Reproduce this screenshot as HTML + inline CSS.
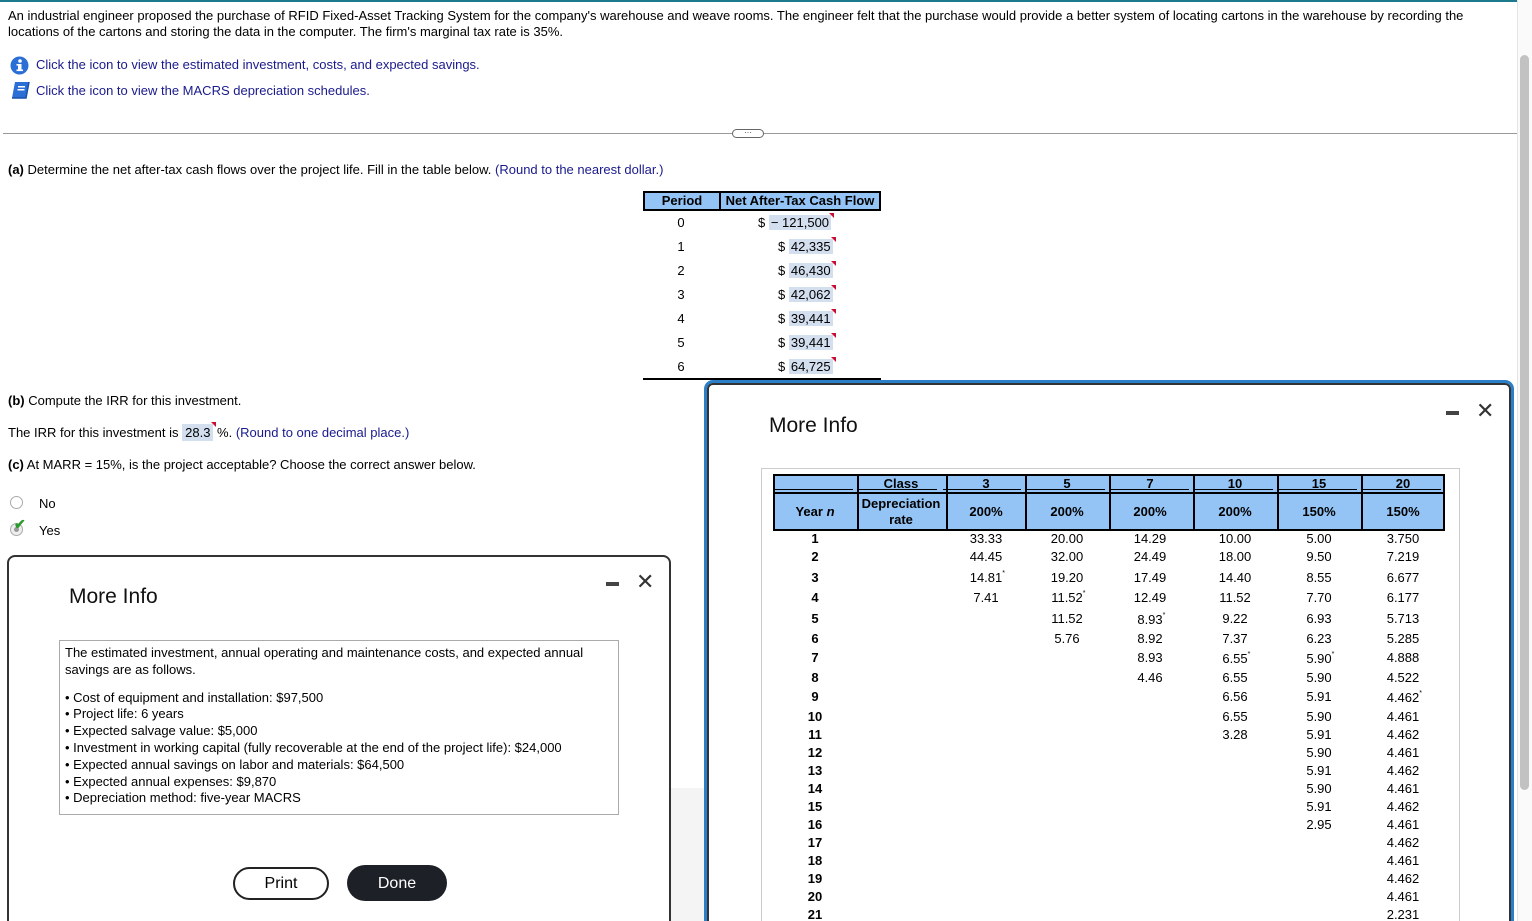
<!DOCTYPE html>
<html><head><meta charset="utf-8"><style>
*{margin:0;padding:0;box-sizing:border-box}
html,body{width:1532px;height:921px;overflow:hidden}
body{background:#fff;font-family:"Liberation Sans",Arial,sans-serif;font-size:13px;color:#000}
#w{position:relative;width:1532px;height:921px;overflow:hidden}
.a{position:absolute;white-space:nowrap}
.blue{color:#1a1a8c}
.inp{background:#d3deef;padding:0 2px;position:relative}
.inp:after{content:"";position:absolute;right:-3px;top:-2px;border-top:5px solid #c8102e;border-left:5px solid transparent}
.hd{position:absolute;background:#93c4f5;border:2px solid #000;font-weight:bold;text-align:center}
.c{position:absolute;text-align:center;width:60px;margin-left:-30px}
sup{font-size:7px;position:absolute}
</style></head><body><div id="w">
<div style="position:absolute;left:0;top:0;width:1532px;height:2px;background:#1d7a8c"></div>
<div class="a" style="left:8px;top:8px;line-height:16px">An industrial engineer proposed the purchase of RFID Fixed-Asset Tracking System for the company's warehouse and weave rooms. The engineer felt that the purchase would provide a better system of locating cartons in the warehouse by recording the<br>locations of the cartons and storing the data in the computer. The firm's marginal tax rate is 35%.</div>
<svg class="a" style="left:10px;top:56px" width="19" height="19"><circle cx="9.5" cy="9.5" r="9" fill="#2b6fd6"/><rect x="8" y="8" width="3.5" height="7" fill="#fff"/><rect x="6.5" y="8" width="5" height="1.6" fill="#fff"/><rect x="6.5" y="13.5" width="6.5" height="1.6" fill="#fff"/><circle cx="10" cy="5" r="1.8" fill="#fff"/></svg>
<div class="a blue" style="left:36px;top:57px">Click the icon to view the estimated investment, costs, and expected savings.</div>
<svg class="a" style="left:10px;top:81px" width="20" height="20"><path d="M5 1h14l-3 16H2z" fill="#2b6fd6"/><path d="M2 17h14l3-16" fill="none" stroke="#1a50a8" stroke-width="1.5"/><rect x="8" y="5" width="7" height="1.5" fill="#fff"/><rect x="7.5" y="8" width="7" height="1.5" fill="#fff"/></svg>
<div class="a blue" style="left:36px;top:83px">Click the icon to view the MACRS depreciation schedules.</div>
<div style="position:absolute;left:3px;top:133px;width:1514px;height:1px;background:#999"></div>
<div style="position:absolute;left:732px;top:129px;width:32px;height:9px;border:1px solid #666;border-radius:5px;background:#fff;font-size:8px;line-height:5px;text-align:center;color:#333">···</div>
<div class="a" style="left:8px;top:162px"><b>(a)</b> Determine the net after-tax cash flows over the project life. Fill in the table below. <span class="blue">(Round to the nearest dollar.)</span></div>
<div class="hd" style="left:643px;top:191px;width:78px;height:20px;line-height:16px">Period</div>
<div class="hd" style="left:719px;top:191px;width:162px;height:20px;line-height:16px;border-left-width:2px">Net After-Tax Cash Flow</div>
<div style="position:absolute;left:643px;top:378px;width:238px;height:2px;background:#000"></div>
<div class="c" style="left:681px;top:215px">0</div><div class="a" style="left:758px;top:215px">$ <span class="inp">&minus; 121,500</span></div>
<div class="c" style="left:681px;top:239px">1</div><div class="a" style="left:778px;top:239px">$ <span class="inp">42,335</span></div>
<div class="c" style="left:681px;top:263px">2</div><div class="a" style="left:778px;top:263px">$ <span class="inp">46,430</span></div>
<div class="c" style="left:681px;top:287px">3</div><div class="a" style="left:778px;top:287px">$ <span class="inp">42,062</span></div>
<div class="c" style="left:681px;top:311px">4</div><div class="a" style="left:778px;top:311px">$ <span class="inp">39,441</span></div>
<div class="c" style="left:681px;top:335px">5</div><div class="a" style="left:778px;top:335px">$ <span class="inp">39,441</span></div>
<div class="c" style="left:681px;top:359px">6</div><div class="a" style="left:778px;top:359px">$ <span class="inp">64,725</span></div>
<div class="a" style="left:8px;top:393px"><b>(b)</b> Compute the IRR for this investment.</div>
<div class="a" style="left:8px;top:425px">The IRR for this investment is <span class="inp" style="padding:1px 3px">28.3</span> %. <span class="blue">(Round to one decimal place.)</span></div>
<div class="a" style="left:8px;top:457px"><b>(c)</b> At MARR = 15%, is the project acceptable? Choose the correct answer below.</div>
<div style="position:absolute;left:10px;top:496px;width:13px;height:13px;border:1px solid #aaa;border-radius:50%"></div>
<div class="a" style="left:39px;top:496px">No</div>
<div style="position:absolute;left:10px;top:523px;width:13px;height:13px;border:1px solid #aaa;border-radius:50%;background:#eee"><div style="margin:3px;width:5px;height:5px;border-radius:50%;background:#999"></div></div>
<div class="a" style="left:14px;top:516px;color:#2a9a2a;font-size:14px;font-weight:bold">✔</div>
<div class="a" style="left:39px;top:523px">Yes</div>
<div style="position:absolute;left:670px;top:788px;width:36px;height:133px;background:#f4f4f4"></div>
<!-- left modal -->
<div style="position:absolute;left:7px;top:555px;width:664px;height:400px;border:2px solid #333;border-radius:8px;background:#fff">
<div class="a" style="left:60px;top:28px;font-size:21px;color:#111">More Info</div>
<div class="a" style="left:597px;top:25px;width:13px;height:4px;background:#444"></div>
<div class="a" style="left:627px;top:12px;font-size:22px;color:#333">✕</div>
<div style="position:absolute;left:50px;top:83px;width:560px;height:175px;border:1px solid #aaa;padding:4px 5px;line-height:16.8px">The estimated investment, annual operating and maintenance costs, and expected annual<br>savings are as follows.<div style="height:11px"></div>• Cost of equipment and installation: $97,500<br>• Project life: 6 years<br>• Expected salvage value: $5,000<br>• Investment in working capital (fully recoverable at the end of the project life): $24,000<br>• Expected annual savings on labor and materials: $64,500<br>• Expected annual expenses: $9,870<br>• Depreciation method: five-year MACRS</div>
<div style="position:absolute;left:224px;top:310px;width:96px;height:33px;border:2px solid #222;border-radius:17px;text-align:center;line-height:29px;font-size:16px">Print</div>
<div style="position:absolute;left:338px;top:308px;width:100px;height:36px;background:#1d2026;border-radius:18px;text-align:center;line-height:38px;font-size:16px;color:#fff">Done</div>
</div>
<!-- right modal -->
<div style="position:absolute;left:704px;top:380px;width:810px;height:580px;border:3px solid #2a7fc8;border-radius:9px;background:#fff">
<div style="position:absolute;inset:0;border:2px solid #333;border-radius:6px"></div>
<div class="a" style="left:62px;top:31px;font-size:21px;color:#111">More Info</div>
<div class="a" style="left:739px;top:28px;width:13px;height:4px;background:#444"></div>
<div class="a" style="left:769px;top:15px;font-size:22px;color:#333">✕</div>
<div style="position:absolute;left:54px;top:85px;width:699px;height:490px;border:1px solid #ccc"></div>
</div>
<div style="position:absolute;left:773px;top:474px;width:672px;height:57px;background:#93c4f5;border:2px solid #000"></div>
<div style="position:absolute;left:773px;top:492px;width:672px;height:2px;background:#000"></div>
<div style="position:absolute;left:775px;top:489px;width:668px;height:1px;background:repeating-linear-gradient(90deg,#000 0 78px,transparent 78px 84px)"></div>
<div style="position:absolute;left:857px;top:474px;width:2px;height:57px;background:#000"></div>
<div style="position:absolute;left:946px;top:474px;width:2px;height:57px;background:#000"></div>
<div style="position:absolute;left:1025px;top:474px;width:2px;height:57px;background:#000"></div>
<div style="position:absolute;left:1109px;top:474px;width:2px;height:57px;background:#000"></div>
<div style="position:absolute;left:1193px;top:474px;width:2px;height:57px;background:#000"></div>
<div style="position:absolute;left:1277px;top:474px;width:2px;height:57px;background:#000"></div>
<div style="position:absolute;left:1361px;top:474px;width:2px;height:57px;background:#000"></div>
<div style="font-weight:bold">
<div class="c" style="left:901px;top:476px">Class</div>
<div class="c" style="left:986px;top:476px">3</div><div class="c" style="left:1067px;top:476px">5</div><div class="c" style="left:1150px;top:476px">7</div><div class="c" style="left:1235px;top:476px">10</div><div class="c" style="left:1319px;top:476px">15</div><div class="c" style="left:1403px;top:476px">20</div>
<div class="c" style="left:815px;top:504px">Year <i>n</i></div>
<div class="c" style="left:901px;top:496px;width:90px;margin-left:-45px;line-height:16px">Depreciation<br>rate</div>
<div class="c" style="left:986px;top:504px">200%</div><div class="c" style="left:1067px;top:504px">200%</div><div class="c" style="left:1150px;top:504px">200%</div><div class="c" style="left:1235px;top:504px">200%</div><div class="c" style="left:1319px;top:504px">150%</div><div class="c" style="left:1403px;top:504px">150%</div>
<div class="c" style="left:815px;top:531px">1</div><div class="c" style="left:815px;top:549px">2</div><div class="c" style="left:815px;top:570px">3</div><div class="c" style="left:815px;top:590px">4</div><div class="c" style="left:815px;top:611px">5</div><div class="c" style="left:815px;top:631px">6</div><div class="c" style="left:815px;top:650px">7</div><div class="c" style="left:815px;top:670px">8</div><div class="c" style="left:815px;top:689px">9</div><div class="c" style="left:815px;top:709px">10</div><div class="c" style="left:815px;top:727px">11</div><div class="c" style="left:815px;top:745px">12</div><div class="c" style="left:815px;top:763px">13</div><div class="c" style="left:815px;top:781px">14</div><div class="c" style="left:815px;top:799px">15</div><div class="c" style="left:815px;top:817px">16</div><div class="c" style="left:815px;top:835px">17</div><div class="c" style="left:815px;top:853px">18</div><div class="c" style="left:815px;top:871px">19</div><div class="c" style="left:815px;top:889px">20</div><div class="c" style="left:815px;top:907px">21</div>
</div>
<div>
<div class="c" style="left:986px;top:531px">33.33</div><div class="c" style="left:986px;top:549px">44.45</div><div class="c" style="left:986px;top:570px">14.81<sup>*</sup></div><div class="c" style="left:986px;top:590px">7.41</div>
<div class="c" style="left:1067px;top:531px">20.00</div><div class="c" style="left:1067px;top:549px">32.00</div><div class="c" style="left:1067px;top:570px">19.20</div><div class="c" style="left:1067px;top:590px">11.52<sup>*</sup></div><div class="c" style="left:1067px;top:611px">11.52</div><div class="c" style="left:1067px;top:631px">5.76</div>
<div class="c" style="left:1150px;top:531px">14.29</div><div class="c" style="left:1150px;top:549px">24.49</div><div class="c" style="left:1150px;top:570px">17.49</div><div class="c" style="left:1150px;top:590px">12.49</div><div class="c" style="left:1150px;top:612px">8.93<sup>*</sup></div><div class="c" style="left:1150px;top:631px">8.92</div><div class="c" style="left:1150px;top:650px">8.93</div><div class="c" style="left:1150px;top:670px">4.46</div>
<div class="c" style="left:1235px;top:531px">10.00</div><div class="c" style="left:1235px;top:549px">18.00</div><div class="c" style="left:1235px;top:570px">14.40</div><div class="c" style="left:1235px;top:590px">11.52</div><div class="c" style="left:1235px;top:611px">9.22</div><div class="c" style="left:1235px;top:631px">7.37</div><div class="c" style="left:1235px;top:651px">6.55<sup>*</sup></div><div class="c" style="left:1235px;top:670px">6.55</div><div class="c" style="left:1235px;top:689px">6.56</div><div class="c" style="left:1235px;top:709px">6.55</div><div class="c" style="left:1235px;top:727px">3.28</div>
<div class="c" style="left:1319px;top:531px">5.00</div><div class="c" style="left:1319px;top:549px">9.50</div><div class="c" style="left:1319px;top:570px">8.55</div><div class="c" style="left:1319px;top:590px">7.70</div><div class="c" style="left:1319px;top:611px">6.93</div><div class="c" style="left:1319px;top:631px">6.23</div><div class="c" style="left:1319px;top:651px">5.90<sup>*</sup></div><div class="c" style="left:1319px;top:670px">5.90</div><div class="c" style="left:1319px;top:689px">5.91</div><div class="c" style="left:1319px;top:709px">5.90</div><div class="c" style="left:1319px;top:727px">5.91</div><div class="c" style="left:1319px;top:745px">5.90</div><div class="c" style="left:1319px;top:763px">5.91</div><div class="c" style="left:1319px;top:781px">5.90</div><div class="c" style="left:1319px;top:799px">5.91</div><div class="c" style="left:1319px;top:817px">2.95</div>
<div class="c" style="left:1403px;top:531px">3.750</div><div class="c" style="left:1403px;top:549px">7.219</div><div class="c" style="left:1403px;top:570px">6.677</div><div class="c" style="left:1403px;top:590px">6.177</div><div class="c" style="left:1403px;top:611px">5.713</div><div class="c" style="left:1403px;top:631px">5.285</div><div class="c" style="left:1403px;top:650px">4.888</div><div class="c" style="left:1403px;top:670px">4.522</div><div class="c" style="left:1403px;top:690px">4.462<sup>*</sup></div><div class="c" style="left:1403px;top:709px">4.461</div><div class="c" style="left:1403px;top:727px">4.462</div><div class="c" style="left:1403px;top:745px">4.461</div><div class="c" style="left:1403px;top:763px">4.462</div><div class="c" style="left:1403px;top:781px">4.461</div><div class="c" style="left:1403px;top:799px">4.462</div><div class="c" style="left:1403px;top:817px">4.461</div><div class="c" style="left:1403px;top:835px">4.462</div><div class="c" style="left:1403px;top:853px">4.461</div><div class="c" style="left:1403px;top:871px">4.462</div><div class="c" style="left:1403px;top:889px">4.461</div><div class="c" style="left:1403px;top:907px">2.231</div>
</div>
<div style="position:absolute;left:1517px;top:0;width:15px;height:921px;background:#fafafa;border-left:1px solid #e5e5e5"></div>
<div style="position:absolute;left:1520px;top:55px;width:9px;height:735px;background:#c2c2c2;border-radius:5px"></div>
</div></body></html>
